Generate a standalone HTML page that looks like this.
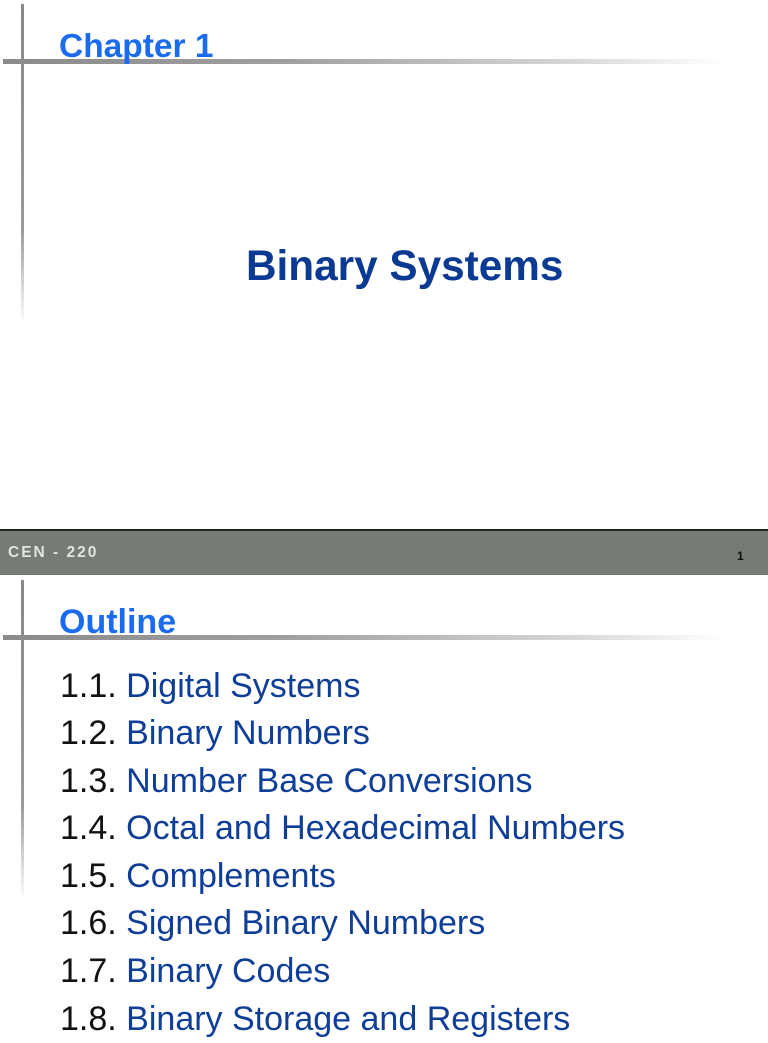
<!DOCTYPE html>
<html><head><meta charset="utf-8"><style>
html,body{margin:0;padding:0;background:#fff;}
body{width:768px;height:1024px;position:relative;overflow:hidden;font-family:"Liberation Sans",Arial,sans-serif;}
.a{position:absolute;white-space:nowrap;}
.v{position:absolute;width:3px;background:linear-gradient(#888 0%,#999 70%,rgba(200,200,200,0) 100%);}
.h{position:absolute;height:5px;background:linear-gradient(90deg,#8a8a8a 0%,#a0a0a0 40%,#d8d8d8 80%,rgba(255,255,255,0) 100%);}
.li{position:absolute;left:60px;font-size:34px;line-height:48px;color:#111;}
.li span{color:#0f3e98;}
</style></head><body>
<div class="v" style="left:21px;top:4px;height:320px"></div>
<div class="h" style="left:3px;top:59px;width:720px"></div>
<div class="a" style="left:59px;top:27px;font-size:33.5px;line-height:40px;font-weight:bold;color:#1a6bef">Chapter 1</div>
<div class="a" style="left:246px;top:241px;font-size:42.3px;line-height:50px;font-weight:bold;color:#0b3a93">Binary Systems</div>

<div class="a" style="left:0;top:529px;width:768px;height:2px;background:#222"></div>
<div class="a" style="left:0;top:531px;width:768px;height:44px;background:#767b76"></div>
<div class="a" style="left:8px;top:544px;font-size:15.5px;font-weight:bold;color:#e4e4e4;letter-spacing:2px">CEN - 220</div>
<div class="a" style="left:737px;top:549px;font-size:12px;font-weight:bold;color:#111">1</div>

<div class="v" style="left:21px;top:580px;height:320px"></div>
<div class="h" style="left:3px;top:635px;width:720px"></div>
<div class="a" style="left:59px;top:602px;font-size:34px;line-height:40px;font-weight:bold;color:#1a6bef">Outline</div>

<div class="li" style="top:662px">1.1. <span>Digital Systems</span></div>
<div class="li" style="top:709px">1.2. <span>Binary Numbers</span></div>
<div class="li" style="top:757px">1.3. <span>Number Base Conversions</span></div>
<div class="li" style="top:804px">1.4. <span>Octal and Hexadecimal Numbers</span></div>
<div class="li" style="top:852px">1.5. <span>Complements</span></div>
<div class="li" style="top:899px">1.6. <span>Signed Binary Numbers</span></div>
<div class="li" style="top:947px">1.7. <span>Binary Codes</span></div>
<div class="li" style="top:995px">1.8. <span>Binary Storage and Registers</span></div>
</body></html>
